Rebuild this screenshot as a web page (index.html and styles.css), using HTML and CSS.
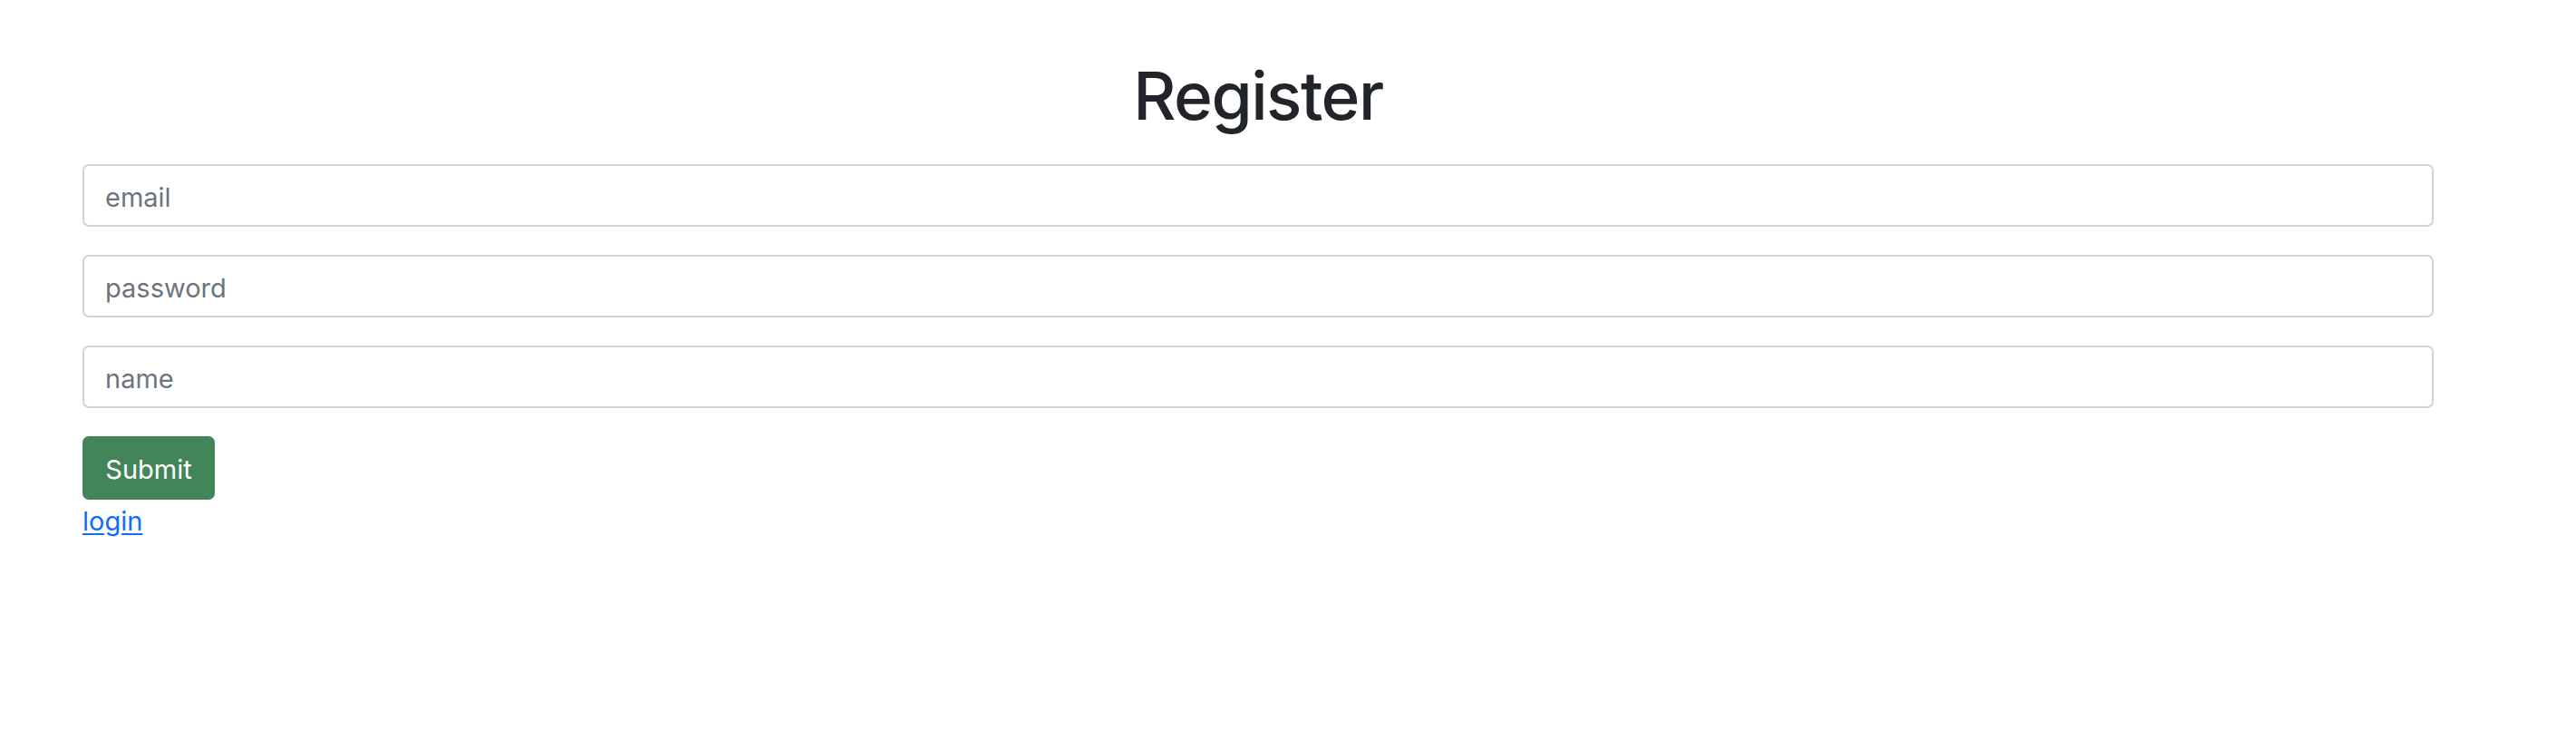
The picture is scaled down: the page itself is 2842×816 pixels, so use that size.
FILE: index.html
```html
<!DOCTYPE html>
<html lang="en">
<head>
<meta charset="utf-8">
<title>Register</title>
<link rel="stylesheet" href="styles.css">
</head>
<body>
<div class="container">
  <h1 class="title">Register</h1>
  <form class="form">
    <input class="field" type="email" placeholder="email">
    <input class="field" type="password" placeholder="password">
    <input class="field" type="text" placeholder="name">
    <button class="submit" type="button">Submit</button>
  </form>
  <a class="link" href="#">login</a>
</div>
</body>
</html>
```
FILE: styles.css
```css
html, body {
  margin: 0;
  padding: 0;
  background: #ffffff;
}
body {
  font-family: Inter, "Liberation Sans", sans-serif;
  color: #212529;
}
.container {
  width: 2594px;
  margin-left: 91px;
}
.title {
  margin: 62px 0 31px 0;
  font-size: 73px;
  font-weight: 500;
  line-height: 88px;
  letter-spacing: -1.5px;
  text-align: center;
  color: #212529;
}
.form {
  display: flex;
  flex-direction: column;
  align-items: flex-start;
  gap: 31px;
}
.field {
  box-sizing: border-box;
  width: 100%;
  height: 69px;
  padding: 3px 23px 0 23px;
  border: 2px solid #ced4da;
  border-radius: 7px;
  font-family: Inter, "Liberation Sans", sans-serif;
  font-size: 29px;
  color: #212529;
  background: #fff;
  outline: none;
}
.field::placeholder {
  color: #6c757d;
  opacity: 1;
}
.submit {
  box-sizing: border-box;
  height: 70px;
  width: 146px;
  padding: 2px 0 0 0;
  border: 0;
  border-radius: 7px;
  background: #428559;
  color: #ffffff;
  font-family: Inter, "Liberation Sans", sans-serif;
  font-size: 29px;
  cursor: pointer;
}
.link {
  display: inline-block;
  margin-top: 2px;
  font-size: 29px;
  line-height: 44px;
  color: #0d6efd;
  text-decoration: underline;
  text-underline-offset: 3px;
}
```
